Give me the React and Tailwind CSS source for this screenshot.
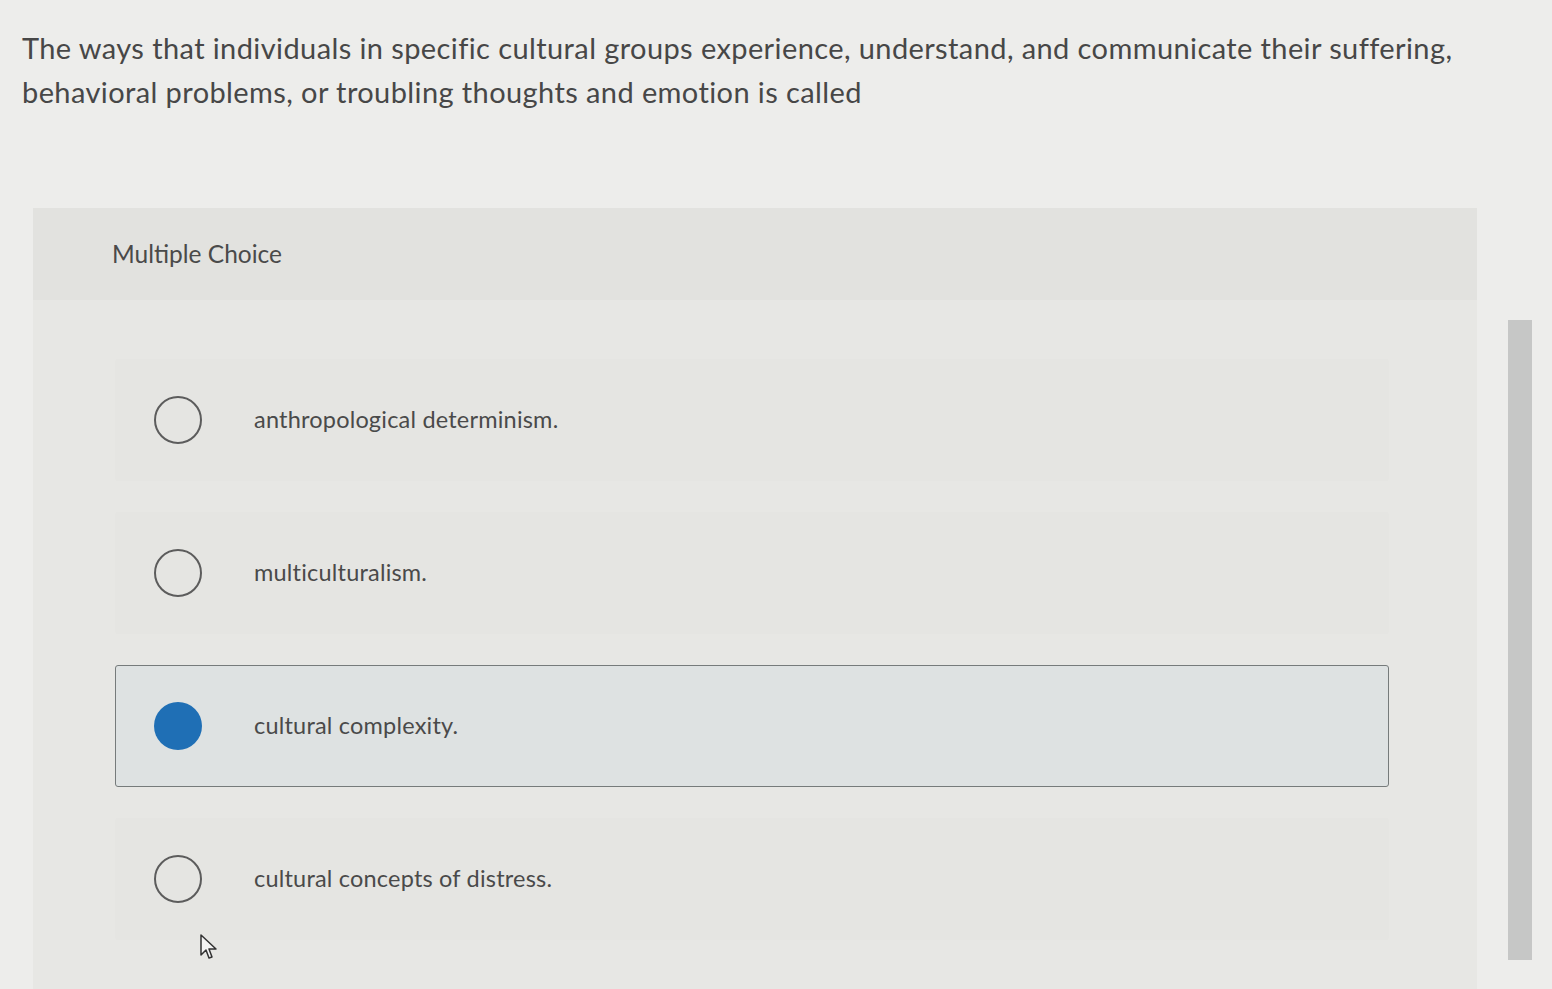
import { useState } from 'react';

const options = [
    'anthropological determinism.',
    'multiculturalism.',
    'cultural complexity.',
    'cultural concepts of distress.',
];

export default function App() {
    const [selected, setSelected] = useState(2);

    return (
        <div className="min-h-screen w-full bg-[#ededeb] text-[#454545] overflow-hidden relative" style={{ fontFamily: 'Lato, "Open Sans", sans-serif' }}>
            {/* Question */}
            <div className="pl-[22px] pt-[26px] pr-[60px] text-[29px] tracking-[0.4px] leading-[44px] text-[#474747]">
                The ways that individuals in specific cultural groups experience, understand, and communicate their suffering,
                behavioral problems, or troubling thoughts and emotion is called
            </div>

            {/* Card */}
            <div className="ml-[33px] mt-[94px] w-[1444px] bg-[#e7e7e4] min-h-[800px]">
                <div className="h-[92px] bg-[#e2e2df] flex items-center pl-[79px] text-[24.5px] text-[#4a4a4a]">
                    Multiple Choice
                </div>

                <div className="pt-[59px] pl-[82px] flex flex-col gap-[31px]">
                    {options.map((opt, i) => {
                        const isSel = selected === i;
                        return (
                            <button
                                key={opt}
                                onClick={() => setSelected(i)}
                                className={
                                    'w-[1274px] h-[122px] flex items-center text-left rounded-[3px] ' +
                                    (isSel
                                        ? 'bg-[#dee2e2] border-[1.5px] border-[#767b7b]'
                                        : 'bg-[#e5e5e2] border-[1.5px] border-transparent')
                                }
                            >
                                <span
                                    className={
                                        'ml-[38px] w-[48px] h-[48px] rounded-full shrink-0 ' +
                                        (isSel ? 'bg-[#1f6fb5]' : 'border-2 border-[#5c5c5c]')
                                    }
                                ></span>
                                <span className="ml-[52px] text-[23.5px] tracking-[0.2px] text-[#4a4a4a]">{opt}</span>
                            </button>
                        );
                    })}
                </div>
            </div>

            {/* right edge bar */}
            <div className="absolute left-[1508px] top-[320px] w-[24px] h-[640px] bg-[#c6c7c6]"></div>

            {/* cursor */}
            <svg className="absolute left-[199px] top-[933px]" width="20" height="28" viewBox="0 0 20 28">
                <path d="M2 2 L2 22 L7 17 L10 25 L13 24 L10 16 L17 16 Z" fill="#f4f4f4" stroke="#333" strokeWidth="1.5" strokeLinejoin="round" />
            </svg>
        </div>
    );
}
